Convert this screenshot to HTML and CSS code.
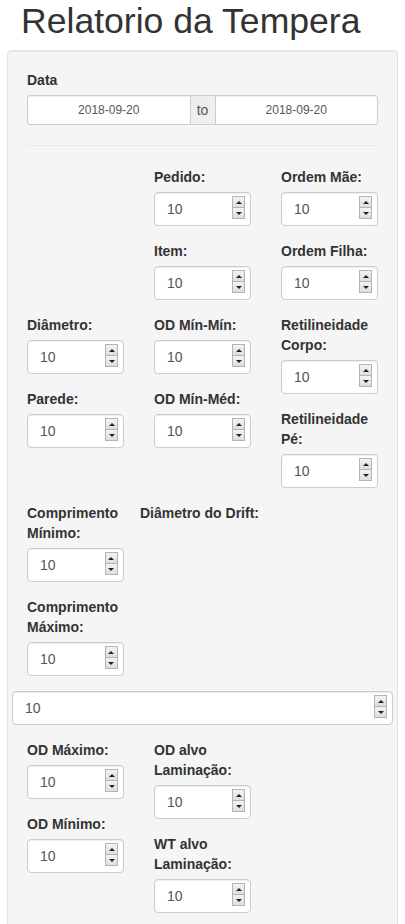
FILE: index.html
```html
<!DOCTYPE html>
<html lang="pt">
<head>
<meta charset="utf-8">
<title>Relatorio da Tempera</title>
<link rel="stylesheet" href="styles.css">
</head>
<body>
<div class="container">
  <h1 class="title">Relatorio da Tempera</h1>
  <div class="well">
    <div class="group">
      <label class="lbl">Data</label>
      <div class="daterange">
        <div class="date-in date-left">2018-09-20</div>
        <div class="addon">to</div>
        <div class="date-in date-right">2018-09-20</div>
      </div>
    </div>
    <hr class="sep">

    <div class="row">
      <div class="col">
        <div class="spacer"></div>
        <div class="group"><label class="lbl">Diâmetro:</label><div class="num"><span>10</span><span class="spin"><i class="up"></i><i class="down"></i></span></div></div>
        <div class="group"><label class="lbl">Parede:</label><div class="num"><span>10</span><span class="spin"><i class="up"></i><i class="down"></i></span></div></div>
      </div>
      <div class="col">
        <div class="group"><label class="lbl">Pedido:</label><div class="num"><span>10</span><span class="spin"><i class="up"></i><i class="down"></i></span></div></div>
        <div class="group"><label class="lbl">Item:</label><div class="num"><span>10</span><span class="spin"><i class="up"></i><i class="down"></i></span></div></div>
        <div class="group"><label class="lbl">OD Mín-Mín:</label><div class="num"><span>10</span><span class="spin"><i class="up"></i><i class="down"></i></span></div></div>
        <div class="group"><label class="lbl">OD Mín-Méd:</label><div class="num"><span>10</span><span class="spin"><i class="up"></i><i class="down"></i></span></div></div>
      </div>
      <div class="col">
        <div class="group"><label class="lbl">Ordem Mãe:</label><div class="num"><span>10</span><span class="spin"><i class="up"></i><i class="down"></i></span></div></div>
        <div class="group"><label class="lbl">Ordem Filha:</label><div class="num"><span>10</span><span class="spin"><i class="up"></i><i class="down"></i></span></div></div>
        <div class="group"><label class="lbl">Retilineidade Corpo:</label><div class="num"><span>10</span><span class="spin"><i class="up"></i><i class="down"></i></span></div></div>
        <div class="group"><label class="lbl">Retilineidade Pé:</label><div class="num"><span>10</span><span class="spin"><i class="up"></i><i class="down"></i></span></div></div>
      </div>
    </div>

    <div class="row2">
      <div class="col2a">
        <div class="group"><label class="lbl">Comprimento Mínimo:</label><div class="num"><span>10</span><span class="spin"><i class="up"></i><i class="down"></i></span></div></div>
        <div class="group"><label class="lbl">Comprimento Máximo:</label><div class="num"><span>10</span><span class="spin"><i class="up"></i><i class="down"></i></span></div></div>
      </div>
      <div class="col2b">
        <label class="lbl">Diâmetro do Drift:</label>
      </div>
    </div>

    <div class="num wide"><span>10</span><span class="spin"><i class="up"></i><i class="down"></i></span></div>

    <div class="row">
      <div class="col">
        <div class="group"><label class="lbl">OD Máximo:</label><div class="num"><span>10</span><span class="spin"><i class="up"></i><i class="down"></i></span></div></div>
        <div class="group"><label class="lbl">OD Mínimo:</label><div class="num"><span>10</span><span class="spin"><i class="up"></i><i class="down"></i></span></div></div>
      </div>
      <div class="col">
        <div class="group"><label class="lbl">OD alvo Laminação:</label><div class="num"><span>10</span><span class="spin"><i class="up"></i><i class="down"></i></span></div></div>
        <div class="group"><label class="lbl">WT alvo Laminação:</label><div class="num"><span>10</span><span class="spin"><i class="up"></i><i class="down"></i></span></div></div>
      </div>
      <div class="col"></div>
    </div>
  </div>
</div>
</body>
</html>
```
FILE: styles.css
```css
* { box-sizing: border-box; }
html, body {
  margin: 0;
  padding: 0;
  background: #fff;
  font-family: "Liberation Sans", Arial, sans-serif;
  font-size: 14px;
  line-height: 20px;
  color: #333;
}
.container {
  padding: 0 7px;
}
.title {
  font-size: 35.6px;
  font-weight: normal;
  line-height: 40px;
  margin: 1px 0 9px 14px;
  color: #333;
}
.well {
  background: #f5f5f5;
  border: 1px solid #e3e3e3;
  border-radius: 4px;
  padding: 19px;
  box-shadow: inset 0 1px 1px rgba(0,0,0,0.05);
}
.lbl {
  display: block;
  font-weight: bold;
  margin-bottom: 5px;
  line-height: 20px;
}
.group {
  margin-bottom: 15px;
}
.daterange {
  display: flex;
  height: 30px;
}
.date-in {
  flex: 1;
  background: #fff;
  border: 1px solid #ccc;
  font-size: 12px;
  color: #555;
  display: flex;
  align-items: center;
  justify-content: center;
  box-shadow: inset 0 1px 1px rgba(0,0,0,0.075);
}
.date-left { border-radius: 3px 0 0 3px; }
.date-right { border-radius: 0 3px 3px 0; }
.addon {
  width: 24px;
  background: #eee;
  border-top: 1px solid #ccc;
  border-bottom: 1px solid #ccc;
  color: #555;
  font-size: 14px;
  display: flex;
  align-items: center;
  justify-content: center;
}
.group:has(.daterange) { margin-bottom: 0; }
.sep {
  border: 0;
  border-top: 1px solid #eaeaea;
  margin: 20px 0 21px;
}
.row {
  display: grid;
  grid-template-columns: repeat(3, 1fr);
  margin: 0 -15px;
}
.col {
  padding: 0 15px;
  min-width: 0;
}
.spacer { height: 148px; }
.num {
  height: 34px;
  background: #fff;
  border: 1px solid #ccc;
  border-radius: 4px;
  box-shadow: inset 0 1px 1px rgba(0,0,0,0.075);
  display: flex;
  align-items: center;
  justify-content: space-between;
  padding: 0 5px 0 12px;
  color: #555;
  font-size: 14px;
}
.spin {
  width: 13px;
  height: 23px;
  margin-top: -3px;
  border: 1px solid #b4b4b4;
  background: #e4e4e4;
  display: flex;
  flex-direction: column;
}
.spin i {
  flex: 1;
  display: flex;
  align-items: center;
  justify-content: center;
  background: linear-gradient(#f3f3f3, #dedede);
}
.spin i.up { border-bottom: 1px solid #b4b4b4; }
.spin i::after {
  content: "";
  width: 0;
  height: 0;
  border-left: 3px solid transparent;
  border-right: 3px solid transparent;
}
.spin i.up::after { border-bottom: 3px solid #222; }
.spin i.down::after { border-top: 3px solid #222; }
.row2 {
  display: flex;
  gap: 16.33px;
}
.col2a {
  width: 96.67px;
  flex: none;
}
.col2b {
  flex: 1;
}
.wide {
  margin: 0 -15px 15px;
}
```
